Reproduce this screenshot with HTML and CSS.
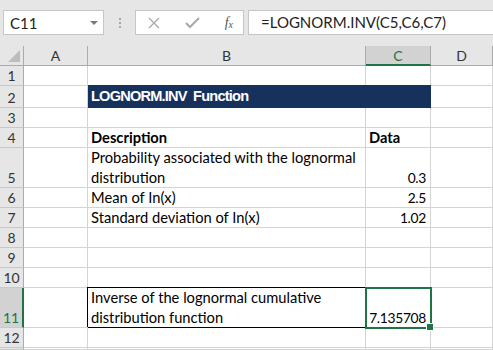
FILE: index.html
```html
<!DOCTYPE html>
<html lang="en">
<head>
    <meta charset="UTF-8">
    <title>LOGNORM.INV Function</title>
    <link rel="stylesheet" href="styles.css">
</head>
<body>
    <div class="formula-bar">
        <div class="name-box">
            <span>C11</span>
            <span class="caret"></span>
        </div>
        <div class="grip"><i></i><i></i><i></i></div>
        <div class="fx-box">
            <svg width="12" height="12" viewBox="0 0 12 12"><path d="M1 1 L11 11 M11 1 L1 11" stroke="#a9a9a9" stroke-width="1.3" fill="none"/></svg>
            <svg width="15" height="12" viewBox="0 0 15 12"><path d="M1 6 L5 10 L14 1" stroke="#a9a9a9" stroke-width="2" fill="none"/></svg>
            <span class="fx">f<sub>x</sub></span>
        </div>
        <div class="formula">=LOGNORM.INV(C5,C6,C7)</div>
    </div>

    <div class="sheet">
        <div class="hd corner"><span class="tri"></span></div>
        <div class="hd">A</div>
        <div class="hd">B</div>
        <div class="hd active-col">C</div>
        <div class="hd">D</div>

        <div class="rh">1</div><div class="c"></div><div class="c"></div><div class="c"></div><div class="c"></div>
        <div class="rh">2</div><div class="c"></div><div class="c title">LOGNORM.INV Function</div><div class="c title-fill"></div><div class="c"></div>
        <div class="rh">3</div><div class="c"></div><div class="c"></div><div class="c"></div><div class="c"></div>
        <div class="rh">4</div><div class="c"></div><div class="c bold">Description</div><div class="c bold">Data</div><div class="c"></div>
        <div class="rh">5</div><div class="c"></div><div class="c">Probability associated with the lognormal distribution</div><div class="c num">0.3</div><div class="c"></div>
        <div class="rh">6</div><div class="c"></div><div class="c">Mean of In(x)</div><div class="c num">2.5</div><div class="c"></div>
        <div class="rh">7</div><div class="c"></div><div class="c">Standard deviation of In(x)</div><div class="c num">1.02</div><div class="c"></div>
        <div class="rh">8</div><div class="c"></div><div class="c"></div><div class="c"></div><div class="c"></div>
        <div class="rh">9</div><div class="c"></div><div class="c"></div><div class="c"></div><div class="c"></div>
        <div class="rh">10</div><div class="c"></div><div class="c"></div><div class="c"></div><div class="c"></div>
        <div class="rh active-row">11</div><div class="c"></div><div class="c boxed">Inverse of the lognormal cumulative distribution function</div><div class="c num selected">7.135708</div><div class="c"></div>
        <div class="rh">12</div><div class="c"></div><div class="c"></div><div class="c"></div><div class="c"></div>
        <div class="rh"></div><div class="c"></div><div class="c"></div><div class="c"></div><div class="c"></div>
    </div>
</body>
</html>
```

FILE: styles.css
```css
:root { --grid: #d4d4d4; --head: #e6e6e6; --head-on: #d2d2d2; --green: #217346; --navy: #16325c; }
body { margin: 0; width: 493px; height: 350px; overflow: hidden; background: #fff; font-family: Lato, "Open Sans", sans-serif; color: #000; }

.formula-bar { height: 46px; background: var(--head); display: flex; align-items: flex-start; padding: 10px 0 0 3px; box-sizing: border-box; }
.name-box { width: 101px; height: 25px; box-sizing: border-box; background: #fff; border: 1px solid #c6c6c6; display: flex; align-items: center; justify-content: space-between; padding: 0 5px 0 6px; font-size: 15px; color: #222; }
.caret { width: 0; height: 0; border-left: 4px solid transparent; border-right: 4px solid transparent; border-top: 4px solid #7a7a7a; }
.grip { width: 31px; height: 25px; display: flex; flex-direction: column; align-items: center; justify-content: center; gap: 2px; }
.grip i { width: 2px; height: 2px; background: #a6a6a6; }
.fx-box { width: 109px; height: 25px; box-sizing: border-box; background: #fff; border: 1px solid #c6c6c6; display: flex; align-items: center; padding: 0 10px 0 12px; justify-content: space-between; }
.fx { font-family: "Liberation Serif", serif; font-style: italic; font-size: 14px; color: #555; }
.fx sub { font-size: 10px; vertical-align: -1px; }
.formula { flex: 1; margin-left: 4px; height: 25px; box-sizing: border-box; background: #fff; border: 1px solid #c6c6c6; border-right: none; padding-left: 12px; font-size: 15px; line-height: 23px; color: #222; }

.sheet { display: grid; grid-template-columns: 24px 64px 278px 65px 1fr; grid-template-rows: 20px 20px 22px 20px 20px 40px 20px 20px 20px 20px 20px 40px 20px 2px; font-size: 14.7px; }
.sheet > div { box-sizing: border-box; border-right: 1px solid var(--grid); border-bottom: 1px solid var(--grid); }
.hd { background: var(--head); border-color: #ababab !important; border-bottom-color: #ababab !important; display: flex; align-items: center; justify-content: center; color: #333; font-size: 14px; }
.hd.corner { position: relative; }
.tri { position: absolute; right: 3px; bottom: 3px; width: 0; height: 0; border-left: 12px solid transparent; border-bottom: 12px solid #bdbdbd; }
.hd.active-col { background: var(--head-on); border-bottom: 2px solid var(--green) !important; color: var(--green); }
.rh { background: var(--head); border-right-color: #ababab !important; border-bottom-color: #c8c8c8 !important; display: flex; align-items: flex-end; justify-content: center; color: #333; font-size: 14px; line-height: 19px; }
.rh.active-row { background: var(--head-on); border-right: 2px solid var(--green) !important; color: var(--green); }

.c { padding: 0 3px; line-height: 19.5px; display: flex; align-items: flex-end; }
.bold { font-weight: 700; }
.num { justify-content: flex-end; font-size: 13.8px; letter-spacing: -0.3px; padding-right: 4px; }
.title { background: var(--navy); border-right-color: var(--navy) !important; border-bottom-color: var(--navy) !important; box-shadow: 0 -1px 0 var(--navy); color: #fff; font-family: "Liberation Sans", Arial, sans-serif; font-weight: 700; font-size: 14.6px; letter-spacing: -0.8px; word-spacing: 3px; align-items: center; }
.title-fill { background: var(--navy); border-right-color: var(--navy) !important; border-bottom-color: var(--navy) !important; box-shadow: 0 -1px 0 var(--navy); }
.boxed { border-right-color: #000 !important; border-bottom-color: #000 !important; box-shadow: -1px -1px 0 #000; }
.selected { position: relative; outline: 2px solid var(--green); outline-offset: -1px; }
.selected::after { content: ""; position: absolute; right: -4px; bottom: -4px; width: 6px; height: 6px; background: var(--green); border: 1px solid #fff; z-index: 1; }
```
